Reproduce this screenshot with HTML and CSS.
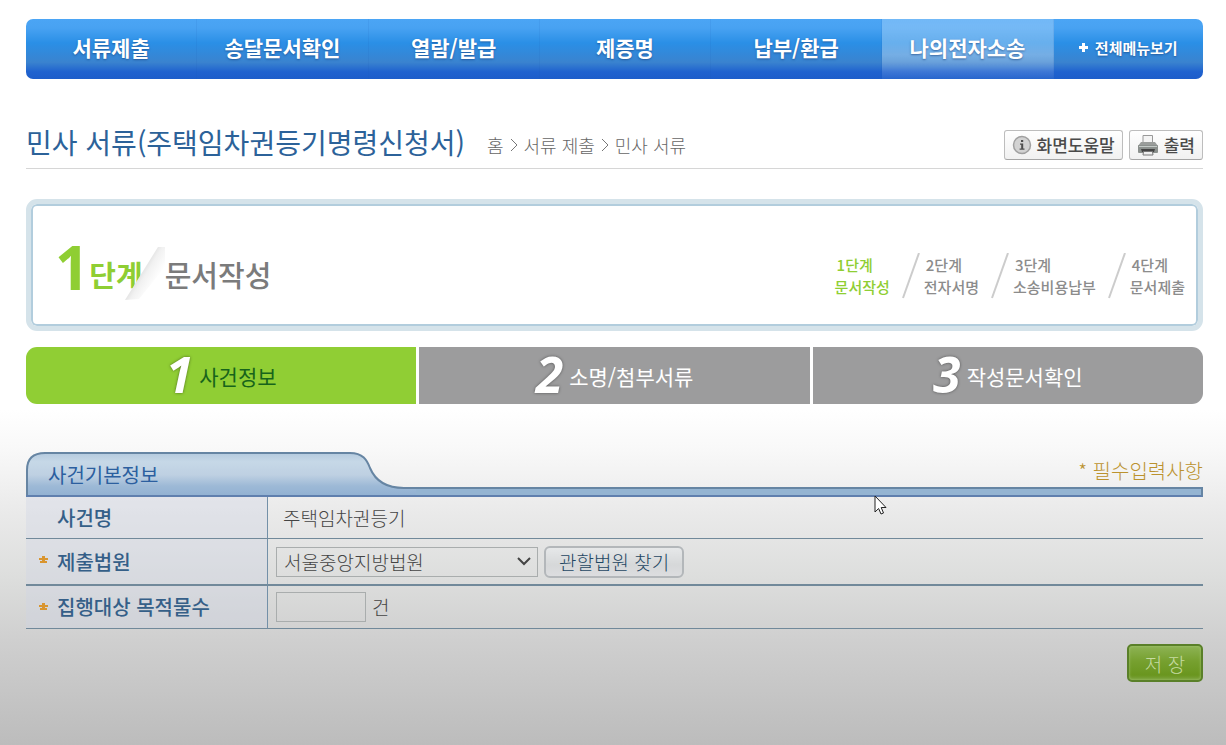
FILE: index.html
```html
<!DOCTYPE html>
<html lang="ko">
<head>
    <meta charset="UTF-8">
    <meta name="viewport" content="width=device-width, initial-scale=1.0">
    <title>민사 서류</title>
    <link rel="stylesheet" href="styles.css">
</head>
<body>
    <div class="page">
        <nav class="main-nav">
            <a href="#">서류제출</a>
            <a href="#">송달문서확인</a>
            <a href="#">열람/발급</a>
            <a href="#">제증명</a>
            <a href="#">납부/환급</a>
            <a href="#" class="active">나의전자소송</a>
            <a href="#" class="all-menu">
                <svg width="9" height="9" viewBox="0 0 9 9"><path d="M3 0h3v3h3v3H6v3H3V6H0V3h3z" fill="#fff"/></svg>
                전체메뉴보기
            </a>
        </nav>

        <header class="page-header">
            <h1>민사 서류(주택임차권등기명령신청서)</h1>
            <div class="breadcrumb">
                <span>홈</span>
                <svg width="8" height="14" viewBox="0 0 8 14"><path d="M1 1l6 6-6 6" fill="none" stroke="#777"/></svg>
                <span>서류 제출</span>
                <svg width="8" height="14" viewBox="0 0 8 14"><path d="M1 1l6 6-6 6" fill="none" stroke="#777"/></svg>
                <span>민사 서류</span>
            </div>
            <div class="tools">
                <button type="button" class="tool-btn">
                    <svg width="20" height="20" viewBox="0 0 20 20">
                        <circle cx="10" cy="10" r="8.5" fill="#d2d2d2" stroke="#a0a0a0" stroke-width="1.5"/>
                        <path d="M9 5h2.200v2H9zM8 8.500h3.200v5h1.300v1.300H7.600v-1.300h1.600v-3.700H8z" fill="#4d4d4d"/>
                    </svg>
                    화면도움말
                </button>
                <button type="button" class="tool-btn">
                    <svg width="22" height="22" viewBox="0 0 22 22">
                        <path d="M6 9V1.500h9.500V9" fill="#f4f4f4" stroke="#999"/>
                        <path d="M4 8h14l3 4H1z" fill="#9a9d9b"/>
                        <rect x="1" y="11" width="20" height="8" rx="1" fill="#8b908d"/>
                        <path d="M2 12.500h18" stroke="#c5cbc8"/>
                        <path d="M4 15h14l-1 3H5z" fill="#444"/>
                        <path d="M6.500 17.500h9l.5 3.500h-10z" fill="#eee" stroke="#777"/>
                    </svg>
                    출력
                </button>
            </div>
        </header>

        <section class="step-box">
            <div class="current-step">
                <span class="step-number">1</span>
                <span class="step-word">단계</span>
                <svg class="fold" width="40" height="54" viewBox="0 0 40 54">
                    <defs>
                        <linearGradient id="fold" x1="14" y1="22" x2="32" y2="33" gradientUnits="userSpaceOnUse">
                            <stop offset="0" stop-color="#d9d9d9"/>
                            <stop offset="0.4" stop-color="#f1f1f1"/>
                            <stop offset="1" stop-color="#fff"/>
                        </linearGradient>
                    </defs>
                    <path d="M33 0h7v20L14 52 0 53z" fill="url(#fold)"/>
                </svg>
                <h2>문서작성</h2>
            </div>
            <ol class="step-list">
                <li class="on"><span>1단계</span><span>문서작성</span></li>
                <li class="slash"><svg width="18" height="46" viewBox="0 0 18 46"><path d="M17 0L1 45" stroke="#ccc" stroke-width="2"/></svg></li>
                <li><span>2단계</span><span>전자서명</span></li>
                <li class="slash"><svg width="18" height="46" viewBox="0 0 18 46"><path d="M17 0L1 45" stroke="#ccc" stroke-width="2"/></svg></li>
                <li><span>3단계</span><span>소송비용납부</span></li>
                <li class="slash"><svg width="18" height="46" viewBox="0 0 18 46"><path d="M17 0L1 45" stroke="#ccc" stroke-width="2"/></svg></li>
                <li><span>4단계</span><span>문서제출</span></li>
            </ol>
        </section>

        <div class="tabs">
            <a href="#" class="tab selected"><em>1</em>사건정보</a>
            <a href="#" class="tab"><em>2</em>소명/첨부서류</a>
            <a href="#" class="tab"><em>3</em>작성문서확인</a>
        </div>

        <form>
            <div class="section-head">
                <div class="section-title">
                    <svg width="390" height="45" viewBox="0 0 390 45">
                        <defs>
                            <linearGradient id="tabFill" x1="0" y1="0" x2="0" y2="1">
                                <stop offset="0" stop-color="#b4cade"/>
                                <stop offset="0.2" stop-color="#c6d8e7"/>
                                <stop offset="0.5" stop-color="#bed0e2"/>
                                <stop offset="0.75" stop-color="#9db9d6"/>
                                <stop offset="1" stop-color="#90b0d2"/>
                            </linearGradient>
                        </defs>
                        <path d="M1 45V18Q1 1 19 1H324C337 1 341 8 344 16C349 28 360 36 378 36H390V45z" fill="url(#tabFill)"/>
                        <path d="M1 45V18Q1 1 19 1H324C337 1 341 8 344 16C349 28 360 36 378 36H390" fill="none" stroke="#6685a3" stroke-width="2"/>
                        <path d="M0 44H390" stroke="#5f7fae" stroke-width="2"/>
                    </svg>
                    <h3>사건기본정보</h3>
                </div>
                <div class="section-side">
                    <p class="required-note">* 필수입력사항</p>
                    <div class="section-bar"></div>
                </div>
            </div>

            <table class="info-table">
                <tr>
                    <th scope="row">사건명</th>
                    <td><span class="case-name">주택임차권등기</span></td>
                </tr>
                <tr class="thick">
                    <th scope="row">
                        <svg width="9" height="8" viewBox="0 0 9 8"><path d="M3 0h3v2h3v2H6v1h2v2H1V5h2V4H0V2h3z" fill="#d9952f"/></svg>
                        <label for="court">제출법원</label>
                    </th>
                    <td>
                        <div class="field">
                            <select id="court">
                                <option>서울중앙지방법원</option>
                            </select>
                            <button type="button" class="find-btn">관할법원 찾기</button>
                        </div>
                    </td>
                </tr>
                <tr>
                    <th scope="row">
                        <svg width="9" height="8" viewBox="0 0 9 8"><path d="M3 0h3v2h3v2H6v1h2v2H1V5h2V4H0V2h3z" fill="#d9952f"/></svg>
                        <label for="count">집행대상 목적물수</label>
                    </th>
                    <td>
                        <div class="field">
                            <input type="text" id="count">
                            <span>건</span>
                        </div>
                    </td>
                </tr>
            </table>

            <div class="actions">
                <button type="submit" class="save-btn">저 장</button>
            </div>
        </form>
    </div>

    <svg class="pointer" width="13" height="20" viewBox="0 0 13 20">
        <path d="M1 1v16l3.600-3.500L7 19l2.500-1-2.300-5.500H12z" fill="#fff" stroke="#222"/>
    </svg>
</body>
</html>
```
FILE: styles.css
```css
* {
    margin: 0;
    padding: 0;
    box-sizing: border-box;
}

body {
    font-family: "Noto Sans CJK KR", "Noto Sans", sans-serif;
    min-height: 100vh;
    background: linear-gradient(#fff 55%, #f9f9f9 60%, #ebebeb 68%, #dcdddc 78%, #cfcfcf 86%, #bcbcbc 100%);
    position: relative;
}

svg {
    display: block;
    flex: none;
}

a {
    text-decoration: none;
}

button, select, input {
    font-family: inherit;
}

.page {
    padding: 19px 23px 0 26px;
}

/* Top menu */
.main-nav {
    display: flex;
    height: 60px;
    border-radius: 7px;
    overflow: hidden;
    background: linear-gradient(#4ba5f5 0%, #48a2f2 15%, #2a8fe6 40%, #3a83cf 72%, #1f62cf 88%, #1d5dca 100%);
}

.main-nav a {
    flex: 171;
    display: flex;
    justify-content: center;
    align-items: center;
    padding-bottom: 4px;
    color: #fff;
    font-size: 21px;
    font-weight: 700;
    white-space: nowrap;
    text-shadow: 0 1px 2px rgba(20, 60, 120, 0.6);
    border-right: 1px solid rgba(30, 90, 180, 0.1);
}

.main-nav .active {
    background: linear-gradient(rgba(255, 255, 255, 0.22), rgba(255, 255, 255, 0.32) 60%, rgba(255, 255, 255, 0.05));
}

.main-nav .all-menu {
    flex: 150;
    gap: 7px;
    font-size: 15px;
    border: none;
}

/* Page title */
.page-header {
    display: flex;
    align-items: center;
    height: 90px;
    padding-top: 42px;
    border-bottom: 1px solid #d6d6d6;
}

.page-header h1 {
    font-size: 28px;
    font-weight: 400;
    line-height: 32px;
    color: #2c6299;
    padding-bottom: 6px;
}

.breadcrumb {
    display: flex;
    align-items: center;
    gap: 6px;
    margin-left: 22px;
    font-size: 18px;
    font-weight: 300;
    color: #666;
}

.tools {
    display: flex;
    gap: 6px;
    margin-left: auto;
}

.tool-btn {
    display: flex;
    align-items: center;
    gap: 5px;
    height: 30px;
    padding: 0 7px;
    border: 1px solid #bdbdbd;
    border-bottom-color: #a5a5a5;
    border-radius: 3px;
    background: linear-gradient(#fff, #f1f1f1);
    font-size: 17px;
    font-weight: 500;
    color: #4a4a4a;
}

/* Current step box */
.step-box {
    display: flex;
    justify-content: space-between;
    align-items: center;
    height: 132px;
    margin-top: 30px;
    padding: 18px 13px 0 24px;
    border: 5px solid #d5e3ea;
    border-radius: 11px;
    background: #fff;
    box-shadow: inset 0 0 0 2px #b2cddd;
}

.current-step {
    display: flex;
    align-items: center;
    font-size: 29px;
}

.step-number {
    font-family: "Open Sans", sans-serif;
    font-size: 60px;
    font-weight: 700;
    line-height: 60px;
    color: #8fce33;
    padding-bottom: 14px;
}

.step-word {
    font-weight: 700;
    color: #8fce33;
}

.fold {
    margin-left: -18px;
}

.current-step h2 {
    font-size: 29px;
    font-weight: 500;
    color: #7b7b7b;
}

.step-list {
    display: flex;
    align-items: center;
    gap: 4px;
    padding-top: 4px;
    list-style: none;
    font-size: 15px;
    font-weight: 500;
    line-height: 22px;
    color: #8c8c8c;
}

.step-list li span {
    display: block;
}

.step-list li span:first-child {
    padding-left: 2px;
}

.step-list .slash {
    margin-left: 8px;
}

.step-list .on {
    color: #8fce33;
}

/* Tabs */
.tabs {
    display: flex;
    gap: 3px;
    margin-top: 16px;
}

.tab {
    flex: 1;
    display: flex;
    justify-content: center;
    align-items: center;
    gap: 6px;
    height: 57px;
    background: #9c9c9d;
    color: #fff;
    font-size: 21px;
}

.tab:first-child {
    border-radius: 11px 0 0 11px;
}

.tab:last-child {
    border-radius: 0 11px 11px 0;
}

.tab em {
    font-family: "Open Sans", sans-serif;
    font-size: 50px;
    font-weight: 700;
    line-height: 56px;
    padding-bottom: 4px;
    color: #fff;
    text-shadow: 0 0 3px rgba(0, 0, 0, 0.5);
}

.tab.selected {
    background: #90ce34;
    color: #17641b;
}

/* Section heading */
.section-head {
    display: flex;
    margin-top: 48px;
}

.section-title {
    display: grid;
    align-items: center;
}

.section-title svg,
.section-title h3 {
    grid-area: 1 / 1;
}

.section-title h3 {
    padding-left: 22px;
    font-size: 20px;
    font-weight: 400;
    line-height: 24px;
    color: #2c5f9f;
}

.section-side {
    flex: 1;
    display: flex;
    flex-direction: column;
    justify-content: flex-end;
}

.required-note {
    text-align: right;
    font-size: 20px;
    font-weight: 300;
    line-height: 30px;
    color: #bb922e;
    padding-bottom: 1px;
}

.section-bar {
    height: 10px;
    background: #94b4d2;
    border: 2px solid #6685a3;
    border-left: none;
    border-bottom-color: #5f7fae;
}

/* Form table */
.info-table {
    width: 100%;
    border-spacing: 0;
}

.info-table th,
.info-table td {
    height: 42px;
    border-bottom: 1px solid #71899a;
    vertical-align: middle;
}

.info-table .thick th,
.info-table .thick td {
    height: 47px;
    border-bottom-width: 2px;
}

.info-table tr:last-child th,
.info-table tr:last-child td {
    height: 43px;
}

.info-table th {
    position: relative;
    width: 242px;
    padding-left: 31px;
    text-align: left;
    font-size: 20px;
    font-weight: 500;
    line-height: 24px;
    color: #355f88;
    background: rgba(205, 211, 228, 0.35);
    border-right: 1px solid #7390a8;
}

/* Required mark in front of the label */
.info-table th svg {
    position: absolute;
    left: 13px;
    top: 17px;
}

.info-table td {
    padding-left: 8px;
    font-size: 19px;
    font-weight: 300;
    line-height: 24px;
    color: #444;
}

.case-name {
    padding-left: 7px;
}

.field {
    display: flex;
    align-items: center;
    gap: 6px;
}

.field select {
    appearance: none;
    width: 262px;
    height: 30px;
    padding-left: 7px;
    border: 1px solid #a9adad;
    background: transparent url("data:image/svg+xml,%3Csvg xmlns='http://www.w3.org/2000/svg' width='14' height='9'%3E%3Cpath d='M1 1l6 6 6-6' fill='none' stroke='%23444' stroke-width='2'/%3E%3C/svg%3E") no-repeat right 6px center;
    font-size: 19px;
    font-weight: 300;
    color: #444;
}

.field input {
    width: 90px;
    height: 30px;
    padding: 0 6px;
    border: 1px solid #a9adad;
    background: transparent;
    font-size: 19px;
}

.find-btn {
    height: 32px;
    padding: 0 13px;
    border: 2px solid #b3b7ba;
    border-radius: 6px;
    background: linear-gradient(#e6e8e9, #d6d8d9 60%, #dcdddf);
    font-size: 19px;
    font-weight: 300;
    line-height: 24px;
    color: #1f4763;
}

.actions {
    display: flex;
    justify-content: flex-end;
    margin-top: 15px;
}

.save-btn {
    width: 76px;
    height: 38px;
    border: 2px solid #5a8029;
    border-radius: 5px;
    background: linear-gradient(#8db354, #76a02f 45%, #6a961f 85%, #7ba23c);
    box-shadow: inset 0 0 3px #a3c470;
    font-size: 19px;
    font-weight: 300;
    color: #c6dba2;
}

/* Mouse pointer lying over the form */
.pointer {
    position: absolute;
    left: 874px;
    top: 495px;
}
```
